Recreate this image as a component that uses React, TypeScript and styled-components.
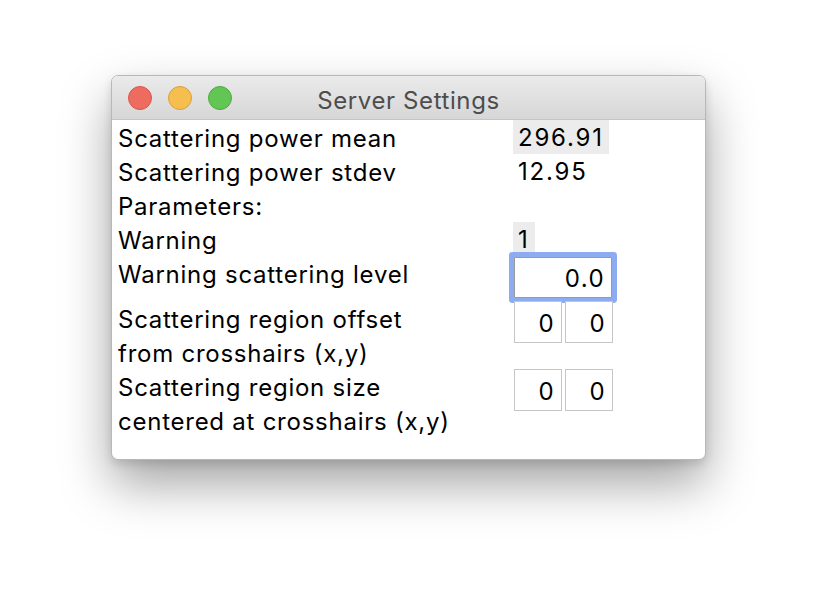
import { Fragment } from "react";
import styled, { createGlobalStyle } from "styled-components";

const GlobalStyle = createGlobalStyle`
	html, body {
		margin: 0;
		padding: 0;
		background: #ffffff;
	}
	body {
		font-family: Inter, "Liberation Sans", sans-serif;
	}
`;

const Desktop = styled.div`
	width: 818px;
	height: 608px;
	padding: 75px 0 0 111px;
	box-sizing: border-box;
	background: #ffffff;
	overflow: hidden;
`;

const Window = styled.div`
	width: 595px;
	height: 385px;
	box-sizing: border-box;
	display: flex;
	flex-direction: column;
	background: #ffffff;
	border: 1px solid #b8b8b8;
	border-radius: 7px;
	overflow: hidden;
	box-shadow: 0 24px 50px rgba(0, 0, 0, 0.36), 0 4px 10px rgba(0, 0, 0, 0.12);
`;

const TitleBar = styled.div`
	position: relative;
	height: 43px;
	flex: none;
	display: flex;
	align-items: center;
	justify-content: center;
	background: linear-gradient(#ebebeb, #d6d6d6);
	border-bottom: 1px solid #c4c4c4;
`;

const Lights = styled.div`
	position: absolute;
	left: 16px;
	top: 10px;
	display: flex;
	gap: 16px;
`;

const Light = styled.span<{ $fill: string; $edge: string }>`
	width: 22px;
	height: 22px;
	border-radius: 50%;
	background: ${(p) => p.$fill};
	border: 1px solid ${(p) => p.$edge};
`;

const Title = styled.div`
	font-size: 24px;
	color: #4d4d4d;
	letter-spacing: 0.6px;
	padding-top: 5px;
`;

const Content = styled.div`
	display: grid;
	grid-template-columns: 395px auto;
	align-items: start;
	padding: 0 6px;
	color: #000000;
	font-size: 24px;
	letter-spacing: 0.75px;
`;

const Label = styled.div`
	line-height: 34px;
	margin: 2px 0 -2px;
	white-space: pre-line;
`;

const Cell = styled.div<{ $height: number }>`
	height: ${(p) => p.$height}px;
	display: flex;
	align-items: flex-start;
	gap: 2px;
`;

const Value = styled.span<{ $shaded?: boolean }>`
	line-height: 32px;
	padding: 2px 5px 0;
	letter-spacing: 1.8px;
	background: ${(p) => (p.$shaded ? "#ececec" : "transparent")};
`;

const Field = styled.input<{ $width: number; $focused?: boolean }>`
	box-sizing: border-box;
	width: ${(p) => p.$width}px;
	height: ${(p) => (p.$focused ? 41 : 42)}px;
	margin: ${(p) => (p.$focused ? "1px 0 0 1px" : "0 0 0 1px")};
	padding: 2px 6px 0 0;
	border: 1px solid ${(p) => (p.$focused ? "#9a9a9a" : "#c6c6c6")};
	border-radius: ${(p) => (p.$focused ? "1px" : "0")};
	box-shadow: ${(p) => (p.$focused ? "0 0 0 5px #8dabf0" : "none")};
	outline: none;
	font-family: Inter, "Liberation Sans", sans-serif;
	font-size: 24px;
	letter-spacing: 1.4px;
	text-align: right;
	color: #000000;
	background: #ffffff;
`;

const rows = [
	{ label: "Scattering power mean", value: "296.91", shaded: true },
	{ label: "Scattering power stdev", value: "12.95" },
	{ label: "Parameters:" },
	{ label: "Warning", value: "1", shaded: true },
];

export default function App() {
	return (
		<>
			<GlobalStyle />
			<Desktop>
				<Window>
					<TitleBar>
						<Lights>
							<Light $fill="#ee6b5f" $edge="#d5584c" />
							<Light $fill="#f6be4f" $edge="#d9a13e" />
							<Light $fill="#62c655" $edge="#4fa940" />
						</Lights>
						<Title>Server Settings</Title>
					</TitleBar>
					<Content>
						{rows.map((r) => (
							<Fragment key={r.label}>
								<Label>{r.label}</Label>
								<Cell $height={34}>
									{r.value && <Value $shaded={r.shaded}>{r.value}</Value>}
								</Cell>
							</Fragment>
						))}
						<Label>Warning scattering level</Label>
						<Cell $height={45}>
							<Field $width={98} $focused readOnly value="0.0" />
						</Cell>
						<Label>{"Scattering region offset\nfrom crosshairs (x,y)"}</Label>
						<Cell $height={68}>
							<Field $width={48} readOnly value="0" />
							<Field $width={48} readOnly value="0" />
						</Cell>
						<Label>{"Scattering region size\ncentered at crosshairs (x,y)"}</Label>
						<Cell $height={68}>
							<Field $width={48} readOnly value="0" />
							<Field $width={48} readOnly value="0" />
						</Cell>
					</Content>
				</Window>
			</Desktop>
		</>
	);
}
